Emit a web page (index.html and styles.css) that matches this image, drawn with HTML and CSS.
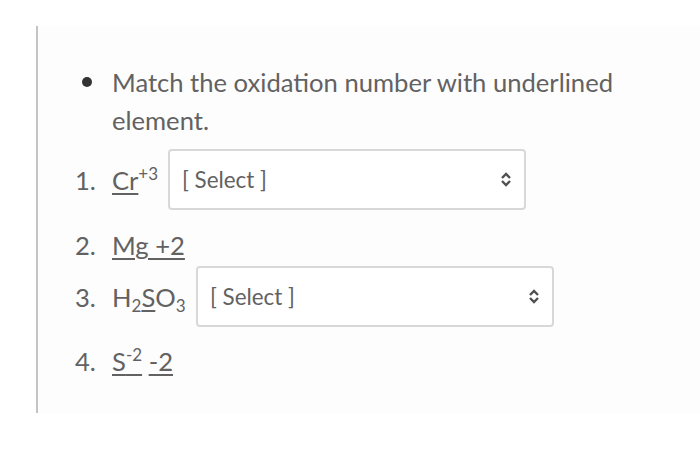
FILE: index.html
```html
<!DOCTYPE html>
<html>
<head>
<meta charset="utf-8">
<link rel="stylesheet" href="styles.css">
</head>
<body>
<div class="panel">
  <div class="intro">
    <span class="bullet"></span>
    <p class="intro-text">Match the oxidation number with underlined<br>element.</p>
  </div>
  <div class="row row1">
    <span class="num">1.</span>
    <span class="chem"><u>Cr</u><sup>+3</sup></span>
    <div class="select"><span>[ Select ]</span>
      <svg class="arrows" width="12" height="17" viewBox="0 0 12 17"><path d="M2 7 L6 3 L10 7" fill="none" stroke="#505050" stroke-width="2.4"/><path d="M2 10 L6 14 L10 10" fill="none" stroke="#505050" stroke-width="2.4"/></svg>
    </div>
  </div>
  <div class="row row2">
    <span class="num">2.</span>
    <span class="chem"><u>Mg +2</u></span>
  </div>
  <div class="row row3">
    <span class="num">3.</span>
    <span class="chem">H<sub>2</sub><u>S</u>O<sub>3</sub></span>
    <div class="select"><span>[ Select ]</span>
      <svg class="arrows" width="12" height="17" viewBox="0 0 12 17"><path d="M2 7 L6 3 L10 7" fill="none" stroke="#505050" stroke-width="2.4"/><path d="M2 10 L6 14 L10 10" fill="none" stroke="#505050" stroke-width="2.4"/></svg>
    </div>
  </div>
  <div class="row row4">
    <span class="num">4.</span>
    <span class="chem"><u>S<sup>-2</sup></u> <u>-2</u></span>
  </div>
</div>
</body>
</html>
```

FILE: styles.css
```css
html, body {
  margin: 0;
  padding: 0;
  background: #ffffff;
}
body {
  font-family: Lato, "Open Sans", sans-serif;
  color: #626262;
  width: 700px;
  height: 461px;
  overflow: hidden;
}
.panel {
  margin-left: 36px;
  margin-top: 26px;
  width: 664px;
  height: 387px;
  box-sizing: border-box;
  border-left: 2px solid #c4c4c4;
  background: #fdfdfd;
  padding-top: 37px;
  padding-left: 37px;
}
.intro {
  display: flex;
  align-items: flex-start;
}
.bullet {
  width: 10px;
  height: 10px;
  border-radius: 50%;
  background: #333;
  margin-left: 7px;
  margin-top: 14px;
  margin-right: 20px;
  flex: none;
}
.intro-text {
  margin: 0;
  font-size: 25.6px;
  line-height: 38px;
  white-space: nowrap;
}
.row {
  display: flex;
  align-items: center;
  font-size: 25.6px;
  line-height: 38px;
}
.row1 { margin-top: 10px; height: 61px; }
.row2 { margin-top: 16px; height: 38px; }
.row3 { margin-top: 2px; height: 61px; }
.row4 { margin-top: 15px; height: 38px; }
.num {
  width: 37px;
  flex: none;
}
.chem {
  flex: none;
  white-space: nowrap;
}
.chem u {
  text-decoration-thickness: 1.5px;
  text-underline-offset: 3px;
}
.chem sup {
  font-size: 17px;
  vertical-align: 10px;
  line-height: 0;
}
.chem sub {
  font-size: 17px;
  vertical-align: -5px;
  line-height: 0;
}
.row1 .chem { width: 56px; }
.row3 .chem { width: 84px; }
.select {
  width: 358px;
  height: 61px;
  box-sizing: border-box;
  border: 2px solid #d8d8d8;
  border-radius: 4px;
  background: #ffffff;
  display: flex;
  align-items: center;
  justify-content: space-between;
  padding-left: 12px;
  padding-right: 12px;
  font-size: 22.4px;
  color: #626262;
}
.arrows {
  display: block;
}
```
